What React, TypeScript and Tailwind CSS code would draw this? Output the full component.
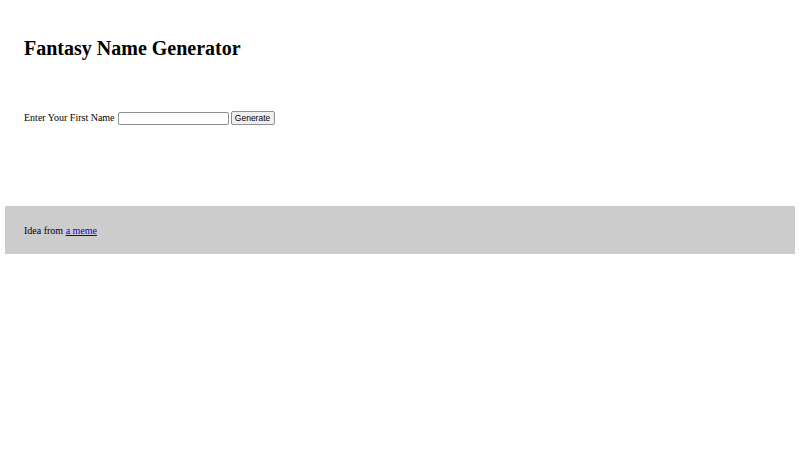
export default function App() {
  return (
    <div className="min-h-[450px] bg-white p-[5px] text-black" style={{ fontFamily: '"Liberation Serif", "Times New Roman", serif' }}>
      <div className="px-[19px] pt-[28px]">
        <h1 className="text-[20px] font-bold leading-[30px]">Fantasy Name Generator</h1>
        <form className="mt-[48px] flex items-center text-[10px] leading-[14px]" onSubmit={(e) => e.preventDefault()}>
          <label htmlFor="first-name">Enter Your First Name</label>
          <input
            id="first-name"
            type="text"
            className="ml-[3px] h-[13px] w-[111px] rounded-[2px] border border-[#8f8f8f] bg-white"
          />
          <button
            type="submit"
            className="ml-[2px] h-[14px] w-[44px] rounded-[2px] border border-[#8f8f8f] bg-[#efefef] text-[8.5px] leading-[12px]"
            style={{ fontFamily: '"Liberation Sans", Arial, sans-serif' }}
          >
            Generate
          </button>
        </form>
      </div>
      <footer className="mt-[81px] flex h-[48px] items-center bg-[#cccccc] px-[19px] text-[10px]">
        <span>
          Idea from{" "}
          <a href="#" className="text-[#0000ee] underline">
            a meme
          </a>
        </span>
      </footer>
    </div>
  );
}
